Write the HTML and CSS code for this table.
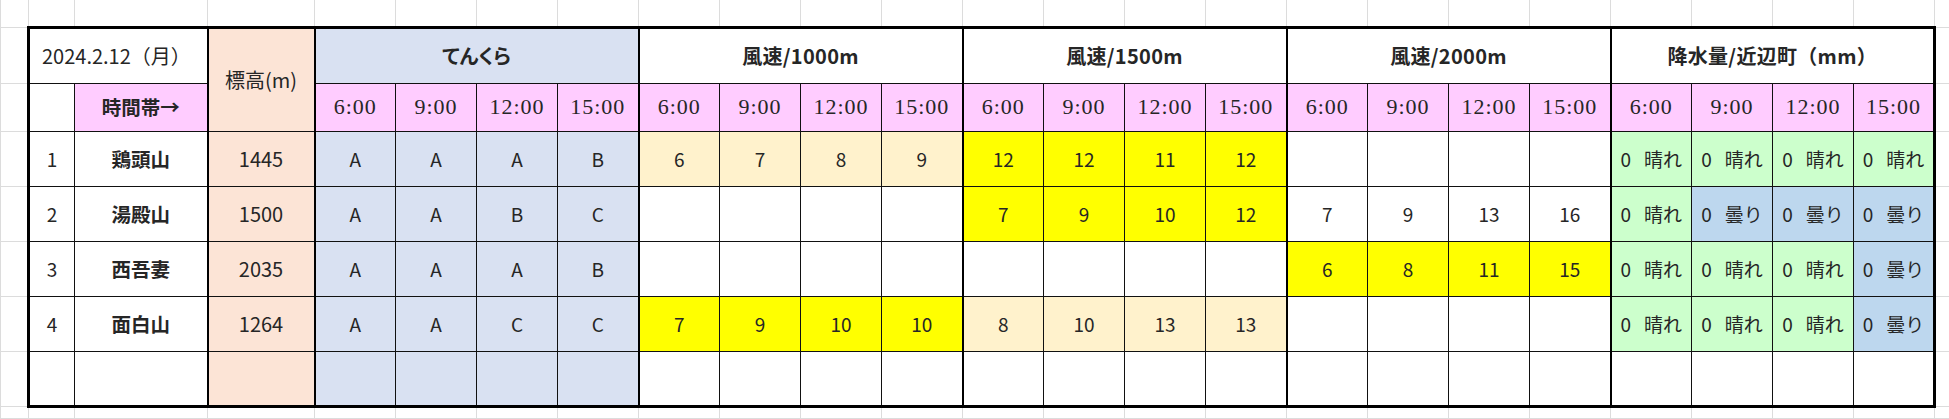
FILE: index.html
```html
<!DOCTYPE html>
<html lang="ja">
<head>
<meta charset="utf-8">
<title>天気表</title>
<link rel="stylesheet" href="styles.css">
</head>
<body>
<table class="sheet">
<colgroup>
<col class="w28"><col class="w46"><col class="w133"><col class="w107">
<col class="w81"><col class="w81"><col class="w81"><col class="w81">
<col class="w81"><col class="w81"><col class="w81"><col class="w81">
<col class="w81"><col class="w81"><col class="w81"><col class="w81">
<col class="w81"><col class="w81"><col class="w81"><col class="w81">
<col class="w81"><col class="w81"><col class="w81"><col class="w81">
<col class="w15">
</colgroup>
<tbody>
<tr class="r0">
<td></td><td></td><td></td><td></td>
<td></td><td></td><td></td><td></td><td></td><td></td><td></td><td></td><td></td><td></td>
<td></td><td></td><td></td><td></td><td></td><td></td><td></td><td></td><td></td><td></td>
<td></td>
</tr>
<tr class="rh1">
<td></td>
<td class="m T L date" colspan="2">2024.2.12（月）</td>
<td class="m T g el" rowspan="2">標高(m)</td>
<td class="m T g tk hd kana" colspan="4">てんくら</td>
<td class="m T g hd" colspan="4">風速/1000m</td>
<td class="m T g hd" colspan="4">風速/1500m</td>
<td class="m T g hd" colspan="4">風速/2000m</td>
<td class="m T g R hd" colspan="4">降水量/近辺町（mm）</td>
<td></td>
</tr>
<tr class="rh2">
<td></td>
<td class="m L"></td>
<td class="m pk b">時間帯→</td>
<td class="m g pk t">6:00</td><td class="m pk t">9:00</td><td class="m pk t">12:00</td><td class="m pk t">15:00</td>
<td class="m g pk t">6:00</td><td class="m pk t">9:00</td><td class="m pk t">12:00</td><td class="m pk t">15:00</td>
<td class="m g pk t">6:00</td><td class="m pk t">9:00</td><td class="m pk t">12:00</td><td class="m pk t">15:00</td>
<td class="m g pk t">6:00</td><td class="m pk t">9:00</td><td class="m pk t">12:00</td><td class="m pk t">15:00</td>
<td class="m g pk t">6:00</td><td class="m pk t">9:00</td><td class="m pk t">12:00</td><td class="m pk t R">15:00</td>
<td></td>
</tr>
<tr class="rd">
<td></td>
<td class="m L">1</td><td class="m b">鶏頭山</td><td class="m g el">1445</td>
<td class="m g tk">A</td><td class="m tk">A</td><td class="m tk">A</td><td class="m tk">B</td>
<td class="m g lt">6</td><td class="m lt">7</td><td class="m lt">8</td><td class="m lt">9</td>
<td class="m g ye">12</td><td class="m ye">12</td><td class="m ye">11</td><td class="m ye">12</td>
<td class="m g"></td><td class="m"></td><td class="m"></td><td class="m"></td>
<td class="m g gn"><span>0</span><span class="w">晴れ</span></td><td class="m gn"><span>0</span><span class="w">晴れ</span></td><td class="m gn"><span>0</span><span class="w">晴れ</span></td><td class="m gn R"><span>0</span><span class="w">晴れ</span></td>
<td></td>
</tr>
<tr class="rd">
<td></td>
<td class="m L">2</td><td class="m b">湯殿山</td><td class="m g el">1500</td>
<td class="m g tk">A</td><td class="m tk">A</td><td class="m tk">B</td><td class="m tk">C</td>
<td class="m g"></td><td class="m"></td><td class="m"></td><td class="m"></td>
<td class="m g ye">7</td><td class="m ye">9</td><td class="m ye">10</td><td class="m ye">12</td>
<td class="m g">7</td><td class="m">9</td><td class="m">13</td><td class="m">16</td>
<td class="m g gn"><span>0</span><span class="w">晴れ</span></td><td class="m bl"><span>0</span><span class="w">曇り</span></td><td class="m bl"><span>0</span><span class="w">曇り</span></td><td class="m bl R"><span>0</span><span class="w">曇り</span></td>
<td></td>
</tr>
<tr class="rd">
<td></td>
<td class="m L">3</td><td class="m b">西吾妻</td><td class="m g el">2035</td>
<td class="m g tk">A</td><td class="m tk">A</td><td class="m tk">A</td><td class="m tk">B</td>
<td class="m g"></td><td class="m"></td><td class="m"></td><td class="m"></td>
<td class="m g"></td><td class="m"></td><td class="m"></td><td class="m"></td>
<td class="m g ye">6</td><td class="m ye">8</td><td class="m ye">11</td><td class="m ye">15</td>
<td class="m g gn"><span>0</span><span class="w">晴れ</span></td><td class="m gn"><span>0</span><span class="w">晴れ</span></td><td class="m gn"><span>0</span><span class="w">晴れ</span></td><td class="m bl R"><span>0</span><span class="w">曇り</span></td>
<td></td>
</tr>
<tr class="rd">
<td></td>
<td class="m L">4</td><td class="m b">面白山</td><td class="m g el">1264</td>
<td class="m g tk">A</td><td class="m tk">A</td><td class="m tk">C</td><td class="m tk">C</td>
<td class="m g ye">7</td><td class="m ye">9</td><td class="m ye">10</td><td class="m ye">10</td>
<td class="m g lt">8</td><td class="m lt">10</td><td class="m lt">13</td><td class="m lt">13</td>
<td class="m g"></td><td class="m"></td><td class="m"></td><td class="m"></td>
<td class="m g gn"><span>0</span><span class="w">晴れ</span></td><td class="m gn"><span>0</span><span class="w">晴れ</span></td><td class="m gn"><span>0</span><span class="w">晴れ</span></td><td class="m bl R"><span>0</span><span class="w">曇り</span></td>
<td></td>
</tr>
<tr class="rd">
<td></td>
<td class="m L B"></td><td class="m B"></td><td class="m g el B"></td>
<td class="m g tk B"></td><td class="m tk B"></td><td class="m tk B"></td><td class="m tk B"></td>
<td class="m g B"></td><td class="m B"></td><td class="m B"></td><td class="m B"></td>
<td class="m g B"></td><td class="m B"></td><td class="m B"></td><td class="m B"></td>
<td class="m g B"></td><td class="m B"></td><td class="m B"></td><td class="m B"></td>
<td class="m g B"></td><td class="m B"></td><td class="m B"></td><td class="m B R"></td>
<td></td>
</tr>
<tr class="rb">
<td></td><td></td><td></td><td></td>
<td></td><td></td><td></td><td></td><td></td><td></td><td></td><td></td><td></td><td></td>
<td></td><td></td><td></td><td></td><td></td><td></td><td></td><td></td><td></td><td></td>
<td></td>
</tr>
<tr class="rb2">
<td></td><td></td><td></td><td></td>
<td></td><td></td><td></td><td></td><td></td><td></td><td></td><td></td><td></td><td></td>
<td></td><td></td><td></td><td></td><td></td><td></td><td></td><td></td><td></td><td></td>
<td></td>
</tr>
</tbody>
</table>
</body>
</html>
```
FILE: styles.css
```css
html, body {
  margin: 0;
  padding: 0;
  background: #ffffff;
  overflow: hidden;
}

.sheet {
  border-collapse: collapse;
  table-layout: fixed;
  width: 1949px;
  font-family: "Noto Sans CJK JP", "Noto Sans", sans-serif;
  font-size: 19px;
  color: #262626;
}

.w28 { width: 28px; }
.w46 { width: 46px; }
.w133 { width: 133px; }
.w107 { width: 107px; }
.w81 { width: 81px; }
.w15 { width: 15px; }

.sheet td {
  border: 1px solid #dcdcdc;
  padding: 0;
  line-height: 1;
}

.r0 { height: 27px; }
.r0 td { border-top: none; }
.rh1 { height: 56px; }
.rh2 { height: 48px; }
.rd { height: 55px; }
.rb { height: 12px; }
.rb2 { height: 12px; }

.sheet td.m {
  border: 1px solid #111;
  background: #ffffff;
  text-align: center;
  vertical-align: middle;
  white-space: nowrap;
}

.sheet td.T { border-top: 3px solid #000; }
.sheet td.L { border-left: 3px solid #000; }
.sheet td.R { border-right: 3px solid #000; }
.sheet td.B { border-bottom: 3px solid #000; }
.sheet td.g { border-left: 2px solid #000; }

.sheet td.date {
  text-align: left;
  padding-left: 12px;
  font-size: 20px;
}

.sheet td.b {
  font-weight: 700;
  font-size: 19.5px;
}

.sheet td.hd {
  font-weight: 700;
  font-size: 20px;
  letter-spacing: 0.3px;
}

.sheet td.kana {
  font-feature-settings: "palt";
  letter-spacing: 0;
}

.sheet td.t {
  font-family: "Liberation Serif", "Noto Sans CJK JP", serif;
  font-size: 22px;
  letter-spacing: 1px;
}

.sheet td.el { background: #fce4d6; font-size: 20px; }
.sheet td.tk { background: #d9e1f2; }
.sheet td.pk { background: #ffccff; }
.sheet td.lt { background: #fff2cc; }
.sheet td.ye { background: #ffff00; }
.sheet td.gn { background: #ccffcc; }
.sheet td.bl { background: #bdd7ee; }

.w { margin-left: 13px; }
```
